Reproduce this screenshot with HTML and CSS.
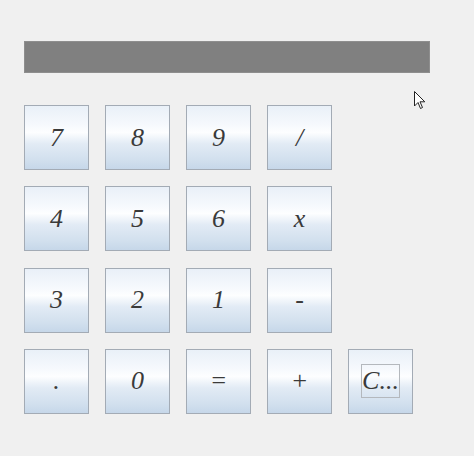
FILE: index.html
```html
<!DOCTYPE html>
<html>
<head>
<meta charset="utf-8">
<link rel="stylesheet" href="styles.css">
</head>
<body>
<div class="frame">
  <div class="display"></div>
  <div class="keys">
    <button class="key">7</button>
    <button class="key">8</button>
    <button class="key">9</button>
    <button class="key">/</button>
    <span class="empty"></span>
    <button class="key">4</button>
    <button class="key">5</button>
    <button class="key">6</button>
    <button class="key">x</button>
    <span class="empty"></span>
    <button class="key">3</button>
    <button class="key">2</button>
    <button class="key">1</button>
    <button class="key">-</button>
    <span class="empty"></span>
    <button class="key">.</button>
    <button class="key">0</button>
    <button class="key">=</button>
    <button class="key">+</button>
    <button class="key"><span class="focus">C...</span></button>
  </div>
  <svg class="cursor" width="12" height="19" viewBox="0 0 12 19">
    <path d="M0.5 0.5 L0.5 15 L4 11.5 L6.5 17.5 L8.5 16.5 L6 10.8 L10.8 10.8 Z" fill="#fff" stroke="#222" stroke-width="1"/>
  </svg>
</div>
</body>
</html>
```

FILE: styles.css
```css
html, body {
  margin: 0;
  padding: 0;
  background: #f0f0f0;
}
.frame {
  position: relative;
  width: 474px;
  height: 456px;
  padding: 41px 0 0 24px;
  box-sizing: border-box;
}
.display {
  width: 406px;
  height: 32px;
  background: #808080;
  box-sizing: border-box;
  border: 1px solid #8e8e8e;
}
.keys {
  margin-top: 32px;
  display: grid;
  grid-template-columns: repeat(5, 65px);
  grid-auto-rows: 65px;
  column-gap: 16px;
  row-gap: 16.3px;
}
.key {
  margin: 0;
  padding: 0;
  border: 1px solid #a3abb5;
  background: linear-gradient(to bottom, #e9f0f8 0%, #f6f9fd 30%, #fdfeff 42%, #e2ebf5 60%, #d2e0ee 85%, #c6d7e9 100%);
  font-family: "Liberation Serif", "Times New Roman", serif;
  font-style: italic;
  font-size: 26px;
  color: #3a3a3a;
  display: flex;
  align-items: center;
  justify-content: center;
  line-height: 1;
}
.focus {
  border: 1px solid #b4b8bd;
  padding: 4px 0;
  line-height: 24px;
}
.cursor {
  position: absolute;
  left: 414px;
  top: 91px;
}
```
